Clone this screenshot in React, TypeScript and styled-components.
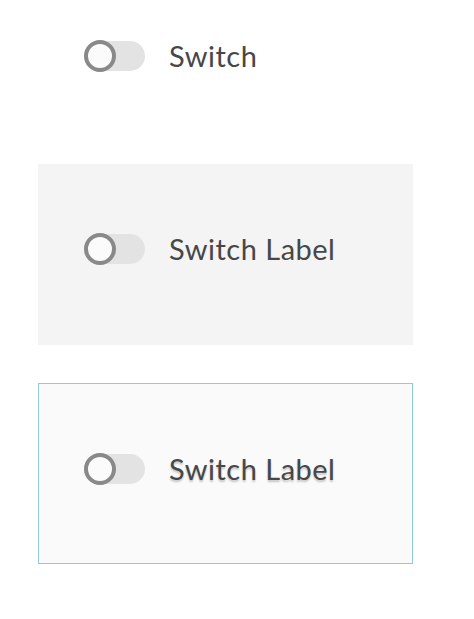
import React from "react";
import styled, { createGlobalStyle } from "styled-components";

const Global = createGlobalStyle`
  html, body { margin: 0; padding: 0; background: #ffffff; }
  body { font-family: Lato, "Open Sans", sans-serif; }
`;

const Page = styled.div`
  display: flex;
  flex-direction: column;
  width: 375px;
  padding: 40px 0 0 38px;
`;

const Row = styled.label<{ $inset?: number }>`
  display: flex;
  align-items: center;
  gap: 24px;
  padding-left: ${(p) => p.$inset ?? 46}px;
`;

const Panel = styled.div<{ $variant: "filled" | "outlined" }>`
  box-sizing: border-box;
  height: 181px;
  display: flex;
  align-items: center;
  margin-top: ${(p) => (p.$variant === "filled" ? "92px" : "38px")};
  padding-bottom: ${(p) => (p.$variant === "filled" ? "11px" : "9px")};
  background: ${(p) => (p.$variant === "filled" ? "#f4f4f4" : "#fafafa")};
  border: ${(p) => (p.$variant === "outlined" ? "1px solid #8ccbe3" : "none")};
`;

const Track = styled.span`
  width: 61px;
  height: 30px;
  border-radius: 15px;
  background: #e3e3e3;
  display: flex;
  align-items: center;
  flex-shrink: 0;
`;

const Knob = styled.span`
  box-sizing: border-box;
  width: 32px;
  height: 32px;
  border-radius: 50%;
  border: 4px solid #898989;
  background: #fbfbfb;
`;

const Label = styled.span<{ $shadow?: boolean }>`
  font-family: Lato, "Open Sans", sans-serif;
  font-size: 29px;
  letter-spacing: 0.5px;
  color: #474747;
  line-height: 32px;
  text-shadow: ${(p) => (p.$shadow ? "0 2px 2px rgba(0,0,0,0.22)" : "none")};
`;

function Switch() {
  return (
    <Track>
      <Knob />
    </Track>
  );
}

export default function App() {
  return (
    <>
      <Global />
      <Page>
        <Row>
          <Switch />
          <Label>Switch</Label>
        </Row>
        <Panel $variant="filled">
          <Row>
            <Switch />
            <Label>Switch Label</Label>
          </Row>
        </Panel>
        <Panel $variant="outlined">
          <Row $inset={45}>
            <Switch />
            <Label $shadow>Switch Label</Label>
          </Row>
        </Panel>
      </Page>
    </>
  );
}
